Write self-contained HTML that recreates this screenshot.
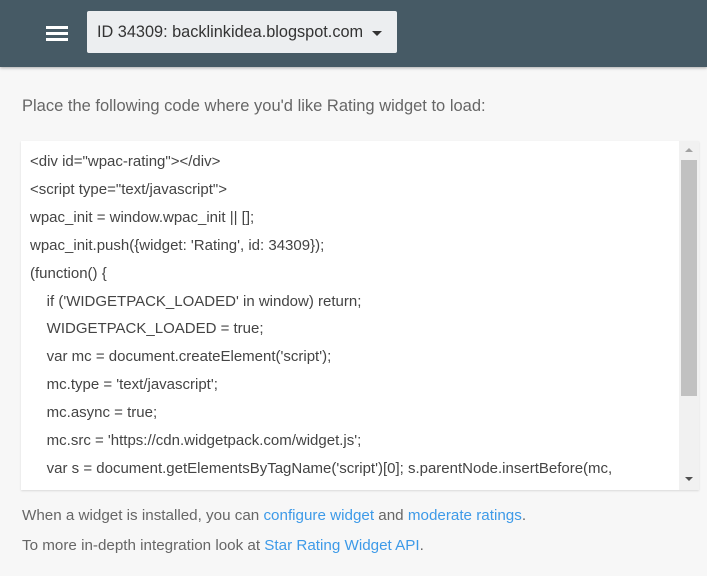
<!DOCTYPE html>
<html><head><style>
body{margin:0;width:707px;height:576px;background:#f7f7f7;font-family:"Liberation Sans",sans-serif;overflow:hidden;position:relative}
.hdr{position:absolute;left:0;top:0;width:707px;height:67px;background:#465a65;box-shadow:0 1px 3px rgba(0,0,0,.3)}
.ham{position:absolute;left:46px;top:26px;width:22px;height:14px}
.ham i{display:block;height:2.5px;background:#fff;margin-bottom:3.5px}
.sel{position:absolute;left:87px;top:11px;width:310px;height:42px;background:#eceef0;border-radius:2px;font-size:16.3px;color:#333;line-height:42px;box-sizing:border-box;padding-left:10px}
.sel b{position:absolute;left:285px;top:20px;border-left:5px solid transparent;border-right:5px solid transparent;border-top:5px solid #333}
.lead{position:absolute;left:22px;top:97px;font-size:16.5px;color:#666}
.box{position:absolute;left:21px;top:141px;width:678px;height:349px;background:#fff;box-shadow:0 1px 2px rgba(0,0,0,.12);overflow:hidden}
.code{position:absolute;left:9px;top:7px;font-size:15px;color:#444;line-height:27.9px;white-space:pre}
.sb{position:absolute;right:0;top:0;width:20px;height:349px;background:#f1f1f1}
.th{position:absolute;left:2px;top:19px;width:16px;height:236px;background:#c1c1c1}
.up{position:absolute;left:6px;top:7px;border-left:4px solid transparent;border-right:4px solid transparent;border-bottom:4px solid #a3a3a3}
.dn{position:absolute;left:6px;top:336px;border-left:4px solid transparent;border-right:4px solid transparent;border-top:4px solid #505050}
.f{position:absolute;left:22px;font-size:15.2px;color:#666}
.f a{color:#3d9ae8;text-decoration:none}
</style></head><body>
<div class="hdr"><div class="ham"><i></i><i></i><i></i></div>
<div class="sel">ID 34309: backlinkidea.blogspot.com<b></b></div></div>
<div class="lead">Place the following code where you'd like Rating widget to load:</div>
<div class="box"><div class="code">&lt;div id="wpac-rating"&gt;&lt;/div&gt;
&lt;script type="text/javascript"&gt;
wpac_init = window.wpac_init || [];
wpac_init.push({widget: 'Rating', id: 34309});
(function() {
    if ('WIDGETPACK_LOADED' in window) return;
    WIDGETPACK_LOADED = true;
    var mc = document.createElement('script');
    mc.type = 'text/javascript';
    mc.async = true;
    mc.src = 'https://cdn.widgetpack.com/widget.js';
    var s = document.getElementsByTagName('script')[0]; s.parentNode.insertBefore(mc,
</div><div class="sb"><div class="up"></div><div class="th"></div><div class="dn"></div></div></div>
<div class="f" style="top:507px">When a widget is installed, you can <a>configure widget</a> and <a>moderate ratings</a>.</div>
<div class="f" style="top:537px">To more in-depth integration look at <a>Star Rating Widget API</a>.</div>
</body></html>
